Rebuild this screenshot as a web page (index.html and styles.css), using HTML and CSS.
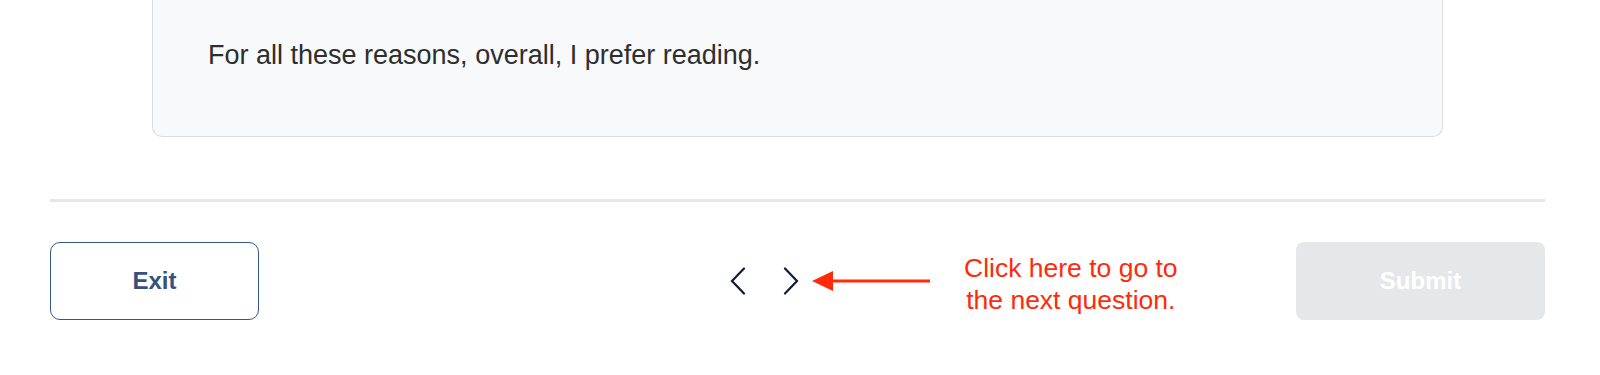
FILE: index.html
```html
<!DOCTYPE html>
<html>
<head>
    <link rel="stylesheet" href="styles.css">
</head>
<body>
    <div class="page">
        <div class="answer-card">
            <p class="answer-text">For all these reasons, overall, I prefer reading.</p>
        </div>
        <hr class="divider">
        <div class="footer">
            <button class="btn-exit">Exit</button>
            <div class="nav">
                <button class="nav-btn" aria-label="Previous">
                    <svg width="16" height="28" viewBox="0 0 16 28"><path d="M14 1.5 L2 14 L14 26.5"/></svg>
                </button>
                <button class="nav-btn" aria-label="Next">
                    <svg width="16" height="28" viewBox="0 0 16 28"><path d="M2 1.5 L14 14 L2 26.5"/></svg>
                </button>
            </div>
            <button class="btn-submit" disabled>Submit</button>

            <div class="hint">
                <svg class="hint-arrow" width="118" height="22" viewBox="0 0 118 22">
                    <polygon points="0,11 21,1 21,21"/>
                    <rect x="20" y="9.5" width="98" height="3"/>
                </svg>
                <div class="hint-text">Click here to go to<br>the next question.</div>
            </div>
        </div>
    </div>
</body>
</html>
```

FILE: styles.css
```css
body {
    margin: 0;
    background: #fff;
    font-family: "Liberation Sans", Arial, sans-serif;
}
.page {
    padding: 0 55px 0 50px;
}
.answer-card {
    margin: 0 102px;
    padding: 38px 55px 64px;
    background: #f8f9fa;
    border: 1px solid #dcdcdc;
    border-top: none;
    border-radius: 0 0 10px 10px;
}
.answer-text {
    margin: 0;
    font-size: 27px;
    line-height: 34px;
    color: #2e2e2e;
}
.divider {
    margin: 62px 0 0;
    height: 3px;
    border: none;
    background: #e5e7eb;
}
.footer {
    position: relative;
    display: flex;
    align-items: center;
    padding-top: 40px;
}
.btn-exit {
    width: 209px;
    height: 78px;
    background: #fff;
    border: 1.6px solid #34558a;
    border-radius: 10px;
    color: #35517d;
    font-family: "Liberation Sans", Arial, sans-serif;
    font-size: 24px;
    font-weight: bold;
    cursor: pointer;
}
.nav {
    display: flex;
    gap: 13px;
    margin-left: 459px;
}
.nav-btn {
    width: 40px;
    height: 40px;
    padding: 0;
    display: flex;
    align-items: center;
    justify-content: center;
    background: none;
    border: none;
    cursor: pointer;
}
.nav-btn path {
    fill: none;
    stroke: #101c36;
    stroke-width: 2.2;
    stroke-linecap: round;
}
.btn-submit {
    margin-left: auto;
    width: 249px;
    height: 78px;
    background: #e5e7eb;
    border: none;
    border-radius: 8px;
    color: #fff;
    font-family: "Liberation Sans", Arial, sans-serif;
    font-size: 24px;
    font-weight: bold;
}
.hint {
    position: absolute;
    left: 762px;
    top: 40px;
    height: 78px;
    display: flex;
    align-items: center;
}
.hint-arrow {
    fill: #ff2a0a;
}
.hint-text {
    margin-left: 34px;
    padding-top: 5px;
    font-size: 26.5px;
    line-height: 32px;
    color: #ff2a0a;
    text-align: center;
}
```
